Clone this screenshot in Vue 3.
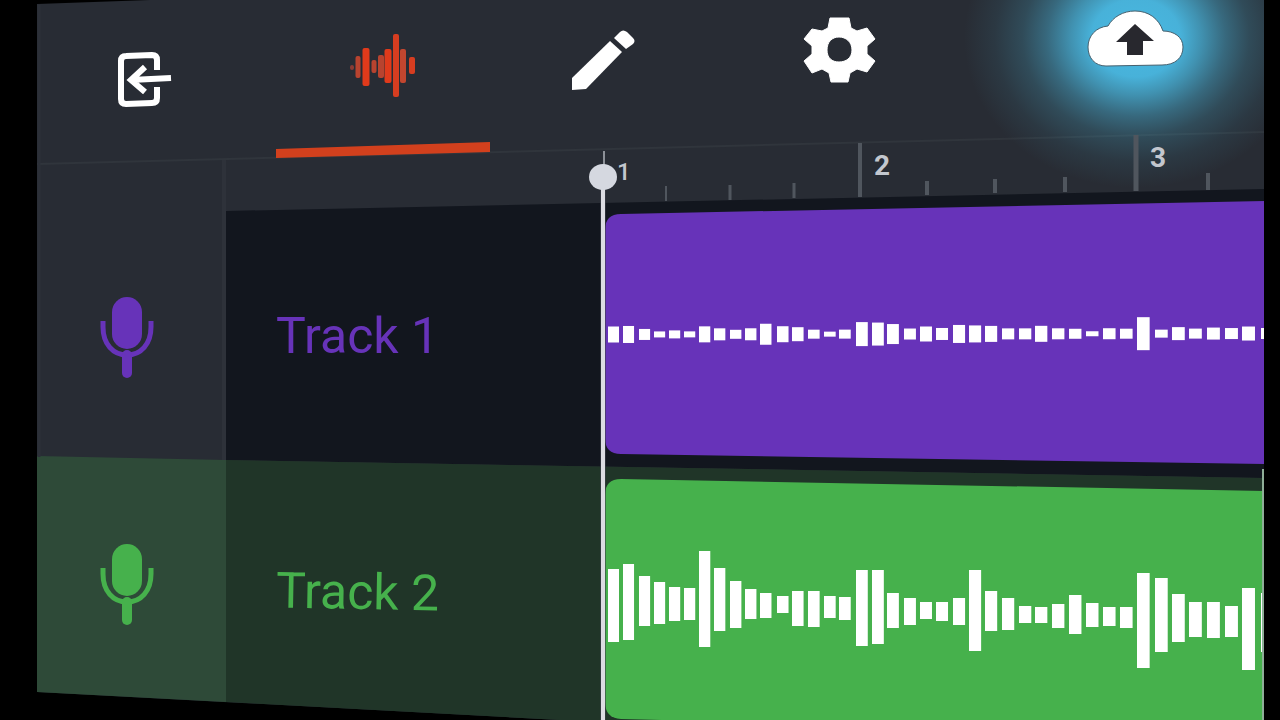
<script setup>
const slots = [
  608, 623, 639, 654, 669, 684, 699, 714, 730, 745, 760, 777, 792, 808, 824, 839, 856, 872, 887, 904, 920,
  936, 953, 969, 985, 1002, 1019, 1035, 1052, 1069, 1086, 1103, 1120, 1137, 1155, 1172, 1189, 1207, 1225,
  1242, 1261,
]

const levels = [
  16, 17, 11, 6, 8, 6, 16, 12, 9, 12, 21, 16, 14, 9, 5, 9, 24, 23, 20, 11, 15, 12, 18, 17, 16, 11, 11, 16,
  11, 10, 5, 11, 10, 33, 8, 13, 10, 12, 11, 14, 11,
]

const peaks = [
  [569, 642], [564, 640], [576, 626], [582, 624], [587, 621], [588, 620], [551, 647], [568, 631], [581, 628],
  [589, 619], [593, 618], [596, 613], [591, 626], [591, 627], [596, 618], [597, 620], [570, 646], [570, 644],
  [593, 628], [598, 625], [602, 619], [602, 621], [598, 625], [570, 651], [591, 631], [598, 630], [606, 623],
  [607, 623], [604, 628], [595, 634], [603, 627], [607, 626], [607, 628], [573, 668], [578, 652], [594, 642],
  [602, 637], [602, 638], [606, 637], [588, 670], [593, 652],
]

const barWidth = (x) => 11 + (x - 608) / 320

const tracks = [
  {
    name: 'Track 1',
    tone: 'violet',
    micBox: '37 206 189 260',
    clipBox: '603 206 661 260',
    shape: 'M605 230Q605 214 621 214L1264 201V464L621 454Q605 454 605 438Z',
    bars: slots.map((x, i) => ({ x, w: barWidth(x), y: 334.5 - i / 40 - levels[i] / 2, h: levels[i] })),
  },
  {
    name: 'Track 2',
    tone: 'green',
    micBox: '37 219 189 254',
    clipBox: '603 466 661 254',
    shape: 'M605 495Q605 479 621 479L1264 491V735L621 719Q605 718 605 702Z',
    bars: slots.map((x, i) => ({ x, w: barWidth(x), y: peaks[i][0], h: peaks[i][1] - peaks[i][0] })),
  },
]

const ticks = [
  [666, 186, 201, 2], [730, 185, 200, 3], [794, 183, 198, 3], [860, 143, 197, 4], [927, 181, 195, 4],
  [995, 179, 193, 4], [1065, 177, 192, 4], [1136, 135, 191, 5], [1208, 173, 190, 4],
]

const waveIcon = [
  [352, 65, 70, 4, '#8a3c34'], [358, 56, 78, 5, '#b8432f'], [366, 48, 86, 7, '#e03a1b'],
  [374, 60, 73, 5, '#b8432f'], [381, 55, 78, 6, '#b8432f'], [388, 49, 83, 7, '#e03a1b'],
  [396, 34, 97, 6, '#d63d20'], [403, 49, 83, 6, '#c2462f'], [412, 57, 74, 6, '#d63d20'],
]
</script>

<template>
  <main class="page">
    <div class="stage">
      <svg class="layer" viewBox="37 0 1227 720" preserveAspectRatio="none" aria-hidden="true">
        <path d="M37 4L150 0H1264V720H560L37 692Z" fill="#282c34" />
        <path d="M226 211L1264 189V478L226 460Z" fill="#12161e" />
        <path d="M37 456L226 460V702L37 692Z" fill="#2e4a38" />
        <path d="M226 460L1264 478V720H560L226 702Z" fill="#203528" />
        <path d="M37 164L1264 132" fill="none" stroke="#30353c" stroke-width="2" />
        <path d="M224 160V460" stroke="#2e323a" stroke-width="4" />
        <path d="M39 5V457" stroke="#2c3038" stroke-width="3" />
      </svg>

      <nav class="toolbar" aria-label="Studio">
        <button type="button" class="tool" aria-label="Exit">
          <svg viewBox="37 0 239 150">
            <g fill="none" stroke="#fff" stroke-width="6">
              <path d="M157 70V60Q157 55 152 55L126 56Q121 56 121 61V99Q121 104 126 104L152 103Q157 103 157 98V87" />
              <path d="M171 78L131 80M145 67L131 80L145 92" />
            </g>
          </svg>
        </button>
        <button type="button" class="tool" aria-label="Tracks" aria-current="page">
          <svg viewBox="276 0 214 150">
            <rect
              v-for="b in waveIcon"
              :key="b[0]"
              :x="b[0] - b[3] / 2"
              :y="b[1]"
              :width="b[3]"
              :height="b[2] - b[1]"
              :fill="b[4]"
              rx="2"
            />
            <path d="M276 149L490 142V152L276 158Z" fill="#d2401d" />
          </svg>
        </button>
        <button type="button" class="tool" aria-label="Edit">
          <svg viewBox="490 0 227 150">
            <path d="M572 78L610 41L622 52L586 89L572 90Z" fill="#fff" />
            <path d="M614 38L620 32Q623 29 627 32L633 38Q636 41 633 44L626 49Z" fill="#fff" />
          </svg>
        </button>
        <button type="button" class="tool" aria-label="Settings">
          <svg viewBox="717 0 246 150">
            <path
              fill="#fff"
              fill-rule="evenodd"
              stroke="#fff"
              stroke-linejoin="round"
              d="M830 18H849L851 28L857 31L867 28L875 39L867 46V54L875 61L867 72L857 69L850 73L848 82H831L829 73L822 69L812 73L804 61L812 54V46L804 39L812 29L822 31L828 28ZM839 37C832 37 827 42 827 50S832 62 839 62S852 58 852 50S846 37 839 37Z"
            />
          </svg>
        </button>
        <button type="button" class="tool" aria-label="Upload">
          <svg viewBox="963 0 301 150">
            <defs>
              <radialGradient id="glow">
                <stop offset="0" stop-color="#49b9e2" />
                <stop offset="0.26" stop-color="#49b7e0" stop-opacity="0.96" />
                <stop offset="0.38" stop-color="#49b5dc" stop-opacity="0.74" />
                <stop offset="0.52" stop-color="#49b0d4" stop-opacity="0.46" />
                <stop offset="0.66" stop-color="#49a9c8" stop-opacity="0.25" />
                <stop offset="0.82" stop-color="#49a9c8" stop-opacity="0.1" />
                <stop offset="1" stop-color="#49a9c8" stop-opacity="0" />
              </radialGradient>
            </defs>
            <ellipse cx="1136" cy="38" rx="172" ry="150" fill="url(#glow)" />
            <path
              d="M1106 66C1095 66 1088 58 1088 47C1088 36 1096 27 1108 26C1113 17 1123 11 1135 11C1149 11 1159 19 1163 31C1174 31 1183 37 1183 47C1183 58 1175 65 1162 65Z"
              fill="#fff"
              stroke="#46606e"
            />
            <path d="M1135 24L1154 41H1143V55H1127V42H1116Z" fill="#28282e" />
          </svg>
        </button>
      </nav>

      <div class="ruler">
        <svg class="marks" viewBox="603 150 661 56" preserveAspectRatio="none" aria-hidden="true">
          <path v-for="t in ticks" :key="t[0]" :d="`M${t[0]} ${t[1]}V${t[2]}`" :stroke-width="t[3]" stroke="#50565e" />
        </svg>
        <span class="bar first">1</span>
        <span class="bar second">2</span>
        <span class="bar third">3</span>
      </div>

      <section v-for="track in tracks" :key="track.name" class="track" :class="track.tone">
        <button type="button" class="mic" :aria-label="`${track.name} input`">
          <svg :viewBox="track.micBox">
            <rect x="112" y="297" width="30" height="52" rx="15" fill="currentColor" />
            <path d="M103 321V327C103 344 113 355 127 355S151 344 151 327V321" fill="none" stroke="currentColor" stroke-width="5" />
            <path d="M127 355V373" stroke="currentColor" stroke-width="10" stroke-linecap="round" />
          </svg>
        </button>
        <h2 class="name">{{ track.name }}</h2>
        <svg class="clip" :viewBox="track.clipBox" preserveAspectRatio="none" role="img" :aria-label="`${track.name} waveform`">
          <path :d="track.shape" fill="currentColor" />
          <rect v-for="b in track.bars" :key="b.x" :x="b.x" :y="b.y" :width="b.w" :height="b.h" fill="#fff" />
        </svg>
      </section>

      <svg class="layer playhead" viewBox="37 0 1227 720" preserveAspectRatio="none" aria-hidden="true">
        <path d="M604 151V170" stroke="#8c9097" stroke-width="2" />
        <path d="M603 180V720" stroke="#3c3f48" stroke-width="6" opacity="0.6" />
        <path d="M603 180V720" stroke="#dcdce2" stroke-width="4" />
        <ellipse cx="603" cy="177" rx="14" ry="13" fill="#d5d8e0" />
        <path d="M1263 469V720" stroke="#8fae98" stroke-width="2" />
      </svg>
    </div>
  </main>
</template>

<style>
body {
  margin: 0;
  background: #000;
}
</style>

<style scoped>
.page {
  box-sizing: border-box;
  min-height: 100vh;
  padding: 0 16px 0 37px;
  display: flex;
  background: #000;
  font-family: Roboto, "Liberation Sans", sans-serif;
}

.stage {
  position: relative;
  flex: 1;
  display: grid;
  grid-template-rows: 150fr 56fr 260fr 254fr;
  overflow: hidden;
}

.layer {
  position: absolute;
  inset: 0;
  width: 100%;
  height: 100%;
}

.playhead {
  pointer-events: none;
}

.toolbar {
  position: relative;
  min-height: 0;
  display: grid;
  grid-template-columns: 239fr 214fr 227fr 246fr 301fr;
}

.tool,
.mic {
  min-width: 0;
  min-height: 0;
  padding: 0;
  border: 0;
  background: none;
  color: inherit;
  cursor: pointer;
}

.tool svg,
.mic svg {
  display: block;
  width: 100%;
  height: 100%;
  overflow: visible;
}

.ruler {
  position: relative;
  display: grid;
  grid-template-columns: 566fr 257fr 276fr 128fr;
  align-items: start;
  color: #c3c7ce;
  font-size: 28px;
  font-weight: 700;
  line-height: 32px;
}

.marks {
  grid-area: 1 / 2 / 2 / 5;
  width: 100%;
  height: 100%;
  overflow: visible;
}

.bar {
  grid-row: 1;
  padding-left: 14px;
}

.first {
  grid-column: 2;
  padding-top: 6px;
  font-size: 24px;
  font-weight: 500;
}

.second {
  grid-column: 3;
}

.third {
  grid-column: 4;
  margin-top: -8px;
}

.track {
  position: relative;
  min-height: 0;
  display: grid;
  grid-template-columns: 189fr 377fr 661fr;
  align-items: center;
}

.mic {
  height: 100%;
}

.name {
  margin: 0;
  padding-left: 50px;
  font-size: 50px;
  font-weight: 400;
  line-height: 56px;
  white-space: nowrap;
}

.clip {
  width: 100%;
  height: 100%;
  min-height: 0;
  overflow: visible;
}

.violet {
  color: #6733b9;
}

.green {
  color: #46b14c;
}

.green .name {
  transform: rotate(1deg);
}
</style>
